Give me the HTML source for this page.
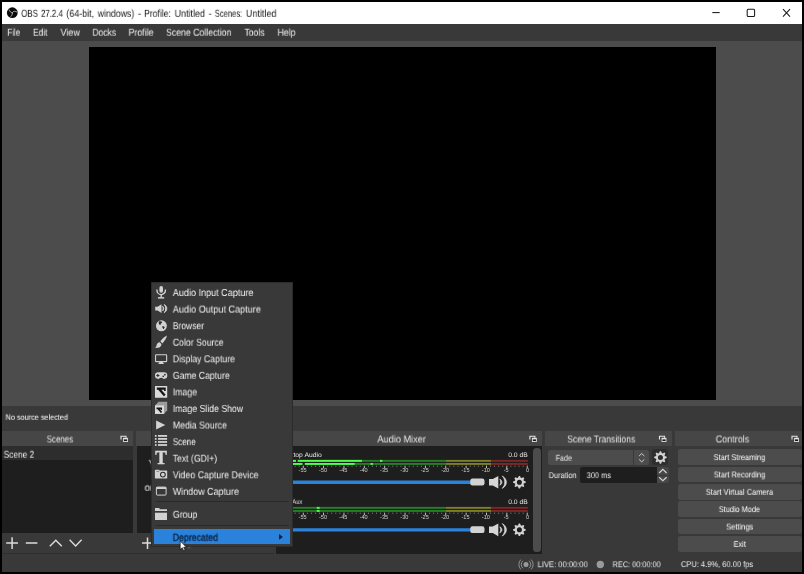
<!DOCTYPE html>
<html><head><meta charset="utf-8"><title>OBS</title>
<style>
html,body{margin:0;padding:0;}
body{width:804px;height:574px;background:#000;position:relative;overflow:hidden;font-family:'Liberation Sans',sans-serif;}
.a{position:absolute;}
.t{will-change:transform;text-rendering:geometricPrecision;left:0;top:0;position:absolute;white-space:pre;line-height:1;transform-origin:0 0;font-family:'Liberation Sans',sans-serif;}
svg{position:absolute;overflow:visible;}
.hdr{position:absolute;background:#474647;top:431px;height:15px;}
.btn{position:absolute;left:678px;width:124px;height:15.6px;background:#4c4c4c;border-radius:2.5px;}

</style></head>
<body>
<!-- window -->
<div class="a" style="left:2px;top:2px;width:800px;height:22px;background:#fff"></div>
<div class="a" style="left:2px;top:24px;width:800px;height:548px;background:#3a393a"></div>
<!-- preview surround + preview -->
<div class="a" style="left:2px;top:41px;width:800px;height:365px;background:#4c4c4c"></div>
<div class="a" style="left:89px;top:47px;width:627px;height:352.5px;background:#000"></div>
<!-- obs icon -->
<svg style="left:0;top:0" width="30" height="30"><circle cx="12.3" cy="12.7" r="5.4" fill="#0a0a0a"/>
<g fill="none" stroke="#d8d8d8" stroke-width="0.75" stroke-linecap="round"><path d="M12.3 12.9C11 12.4 9.6 11.4 9.2 10"/><path d="M12.3 12.9C12.6 11.8 13.6 11.2 14.6 11.3C15.4 11.4 16.2 11.6 16.7 11.9"/><path d="M12.3 12.9C12.6 14.2 12 15.6 10.9 16.5"/></g></svg>
<!-- window controls -->
<svg style="left:0;top:0" width="804" height="30"><g fill="none" stroke="#1a1a1a" stroke-width="1.05">
<path d="M712.3 12.6H719.7"/><rect x="747.2" y="9.2" width="7.4" height="7.2" rx="1"/><path d="M783 9.2L790 16.6M790 9.2L783 16.6"/></g></svg>

<!-- dock headers -->
<div class="hdr" style="left:2px;width:131px"></div>
<div class="hdr" style="left:136px;width:137px"></div>
<div class="hdr" style="left:276px;width:266px"></div>
<div class="hdr" style="left:545px;width:127px"></div>
<div class="hdr" style="left:675px;width:127px"></div>
<!-- scenes list -->
<div class="a" style="left:2px;top:446px;width:131px;height:87px;background:#1f1e1f"></div>
<div class="a" style="left:2px;top:446px;width:131px;height:14px;background:#2e2d2e"></div>
<!-- sources list -->
<div class="a" style="left:137px;top:446px;width:136px;height:87px;background:#1f1e1f"></div>
<!-- mixer -->
<div class="a" style="left:276px;top:446px;width:266px;height:107.5px;background:#1f1e1f"></div>
<div class="a" style="left:533px;top:447.5px;width:7.5px;height:104px;background:#4c4c4c;border-radius:3.5px"></div>
<!-- toolbar line -->
<div class="a" style="left:2px;top:553px;width:272px;height:1px;background:#2f2e2f"></div>
<!-- scenes toolbar icons -->
<svg style="left:0;top:0" width="300" height="574"><g fill="none" stroke="#dcdcdc" stroke-width="1.5">
<path d="M6.2 543H18M12.1 537.2V549"/><path d="M25.8 543H37.4"/>
<path d="M49.8 546.3L55.8 540.2L61.8 546.3" stroke-width="1.4"/><path d="M69.6 539.8L75.6 545.9L81.6 539.8" stroke-width="1.4"/>
<path d="M142 543H153M147.5 537.4V549"/>
</g></svg>
<!-- float icons -->
<svg style="left:0;top:0" width="804" height="574">
<g transform="translate(121 435.7)"><path d="M0 3.9V0.5H5V2" fill="none" stroke="#e6e6e6" stroke-width="1.1"/><rect x="2.1" y="2.1" width="4.8" height="4.2" fill="#e6e6e6"/><rect x="2.9" y="3.7" width="3.2" height="1.7" fill="#1a1a1a"/></g>
<g transform="translate(529.9 435.7)"><path d="M0 3.9V0.5H5V2" fill="none" stroke="#e6e6e6" stroke-width="1.1"/><rect x="2.1" y="2.1" width="4.8" height="4.2" fill="#e6e6e6"/><rect x="2.9" y="3.7" width="3.2" height="1.7" fill="#1a1a1a"/></g>
<g transform="translate(659.5 435.7)"><path d="M0 3.9V0.5H5V2" fill="none" stroke="#e6e6e6" stroke-width="1.1"/><rect x="2.1" y="2.1" width="4.8" height="4.2" fill="#e6e6e6"/><rect x="2.9" y="3.7" width="3.2" height="1.7" fill="#1a1a1a"/></g>
<g transform="translate(792 435.7)"><path d="M0 3.9V0.5H5V2" fill="none" stroke="#e6e6e6" stroke-width="1.1"/><rect x="2.1" y="2.1" width="4.8" height="4.2" fill="#e6e6e6"/><rect x="2.9" y="3.7" width="3.2" height="1.7" fill="#1a1a1a"/></g>
</svg>

<!-- transitions -->
<div class="a" style="left:548.4px;top:449.8px;width:100.4px;height:15px;background:#4c4c4c;border-radius:2.5px"></div>
<div class="a" style="left:632.9px;top:449.8px;width:1.2px;height:15px;background:#3a393a"></div>
<div class="a" style="left:651.9px;top:449.4px;width:16.6px;height:15.4px;background:#2f2e2f;border-radius:3px"></div>
<div class="a" style="left:580px;top:466.9px;width:77px;height:15.8px;background:#1f1e1f;border-radius:2.5px 0 0 2.5px"></div>
<div class="a" style="left:656.6px;top:467.2px;width:12.1px;height:7.5px;background:#484748;border-radius:0 2.5px 0 0"></div>
<div class="a" style="left:656.6px;top:475.6px;width:12.1px;height:7.1px;background:#484748;border-radius:0 0 2.5px 0"></div>
<svg style="left:0;top:0" width="804" height="574"><g fill="none" stroke="#d4d4d4" stroke-width="0.95">
<path d="M639.1 456L641.7 453.5L644.3 456M639.1 459.4L641.7 461.9L644.3 459.4"/>
<path d="M659.1 473L662.85 469.4L666.6 473M659.1 477.3L662.85 480.7L666.6 477.3" stroke-width="1.25"/></g></svg>

<!-- control buttons -->
<div class="btn" style="top:449.2px"></div><div class="btn" style="top:466.6px"></div><div class="btn" style="top:484.0px"></div>
<div class="btn" style="top:501.4px"></div><div class="btn" style="top:518.8px"></div><div class="btn" style="top:536.2px"></div>

<!-- status icons -->
<svg style="left:0;top:0" width="804" height="574"><circle cx="600.3" cy="564.5" r="3.7" fill="#9a9a9a"/>
<circle cx="526" cy="564.5" r="2.5" fill="#9a9a9a"/>
<g fill="none" stroke="#9a9a9a" stroke-width="0.9"><path d="M523 560.8A4.8 4.8 0 0 0 523 568.2M529 560.8A4.8 4.8 0 0 1 529 568.2"/><path d="M520.8 559.6A7.2 7.2 0 0 0 520.8 569.4M531.2 559.6A7.2 7.2 0 0 1 531.2 569.4"/></g></svg>
<svg style="left:0;top:0;will-change:transform" width="804" height="574">
<rect x="283.0" y="459.9" width="162.7" height="1.9" fill="#267f26"/>
<rect x="445.7" y="459.9" width="45.6" height="1.9" fill="#7f7f26"/>
<rect x="491.3" y="459.9" width="36.5" height="1.9" fill="#7f2626"/>
<rect x="283.0" y="463.0" width="162.7" height="1.9" fill="#267f26"/>
<rect x="445.7" y="463.0" width="45.6" height="1.9" fill="#7f7f26"/>
<rect x="491.3" y="463.0" width="36.5" height="1.9" fill="#7f2626"/>
<rect x="283.0" y="459.9" width="79.0" height="1.9" fill="#4cff4c"/>
<rect x="283.0" y="463" width="71.69999999999999" height="1.9" fill="#4cff4c"/>
<rect x="380" y="459.9" width="2.4" height="1.9" fill="#4cff4c"/>
<rect x="370.5" y="463" width="2.4" height="1.9" fill="#4cff4c"/>
<rect x="296" y="459.8" width="1.7" height="2.1" fill="#1f1e1f"/>
<rect x="302.5" y="462.9" width="2.3" height="2.1" fill="#1f1e1f"/>
<rect x="286.55" y="465.6" width="0.8" height="1.2" fill="#909090"/>
<rect x="290.62" y="465.6" width="0.8" height="1.2" fill="#909090"/>
<rect x="294.70" y="465.6" width="0.8" height="1.2" fill="#909090"/>
<rect x="298.77" y="465.6" width="0.8" height="1.2" fill="#909090"/>
<rect x="302.79" y="465.6" width="0.9" height="2.6" fill="#d0d0d0"/>
<rect x="306.91" y="465.6" width="0.8" height="1.2" fill="#909090"/>
<rect x="310.98" y="465.6" width="0.8" height="1.2" fill="#909090"/>
<rect x="315.06" y="465.6" width="0.8" height="1.2" fill="#909090"/>
<rect x="319.13" y="465.6" width="0.8" height="1.2" fill="#909090"/>
<rect x="323.15" y="465.6" width="0.9" height="2.6" fill="#d0d0d0"/>
<rect x="327.27" y="465.6" width="0.8" height="1.2" fill="#909090"/>
<rect x="331.34" y="465.6" width="0.8" height="1.2" fill="#909090"/>
<rect x="335.42" y="465.6" width="0.8" height="1.2" fill="#909090"/>
<rect x="339.49" y="465.6" width="0.8" height="1.2" fill="#909090"/>
<rect x="343.51" y="465.6" width="0.9" height="2.6" fill="#d0d0d0"/>
<rect x="347.63" y="465.6" width="0.8" height="1.2" fill="#909090"/>
<rect x="351.70" y="465.6" width="0.8" height="1.2" fill="#909090"/>
<rect x="355.78" y="465.6" width="0.8" height="1.2" fill="#909090"/>
<rect x="359.85" y="465.6" width="0.8" height="1.2" fill="#909090"/>
<rect x="363.87" y="465.6" width="0.9" height="2.6" fill="#d0d0d0"/>
<rect x="367.99" y="465.6" width="0.8" height="1.2" fill="#909090"/>
<rect x="372.06" y="465.6" width="0.8" height="1.2" fill="#909090"/>
<rect x="376.14" y="465.6" width="0.8" height="1.2" fill="#909090"/>
<rect x="380.21" y="465.6" width="0.8" height="1.2" fill="#909090"/>
<rect x="384.23" y="465.6" width="0.9" height="2.6" fill="#d0d0d0"/>
<rect x="388.35" y="465.6" width="0.8" height="1.2" fill="#909090"/>
<rect x="392.42" y="465.6" width="0.8" height="1.2" fill="#909090"/>
<rect x="396.50" y="465.6" width="0.8" height="1.2" fill="#909090"/>
<rect x="400.57" y="465.6" width="0.8" height="1.2" fill="#909090"/>
<rect x="404.59" y="465.6" width="0.9" height="2.6" fill="#d0d0d0"/>
<rect x="408.71" y="465.6" width="0.8" height="1.2" fill="#909090"/>
<rect x="412.78" y="465.6" width="0.8" height="1.2" fill="#909090"/>
<rect x="416.86" y="465.6" width="0.8" height="1.2" fill="#909090"/>
<rect x="420.93" y="465.6" width="0.8" height="1.2" fill="#909090"/>
<rect x="424.95" y="465.6" width="0.9" height="2.6" fill="#d0d0d0"/>
<rect x="429.07" y="465.6" width="0.8" height="1.2" fill="#909090"/>
<rect x="433.14" y="465.6" width="0.8" height="1.2" fill="#909090"/>
<rect x="437.22" y="465.6" width="0.8" height="1.2" fill="#909090"/>
<rect x="441.29" y="465.6" width="0.8" height="1.2" fill="#909090"/>
<rect x="445.31" y="465.6" width="0.9" height="2.6" fill="#d0d0d0"/>
<rect x="449.43" y="465.6" width="0.8" height="1.2" fill="#909090"/>
<rect x="453.50" y="465.6" width="0.8" height="1.2" fill="#909090"/>
<rect x="457.58" y="465.6" width="0.8" height="1.2" fill="#909090"/>
<rect x="461.65" y="465.6" width="0.8" height="1.2" fill="#909090"/>
<rect x="465.67" y="465.6" width="0.9" height="2.6" fill="#d0d0d0"/>
<rect x="469.79" y="465.6" width="0.8" height="1.2" fill="#909090"/>
<rect x="473.86" y="465.6" width="0.8" height="1.2" fill="#909090"/>
<rect x="477.94" y="465.6" width="0.8" height="1.2" fill="#909090"/>
<rect x="482.01" y="465.6" width="0.8" height="1.2" fill="#909090"/>
<rect x="486.03" y="465.6" width="0.9" height="2.6" fill="#d0d0d0"/>
<rect x="490.15" y="465.6" width="0.8" height="1.2" fill="#909090"/>
<rect x="494.22" y="465.6" width="0.8" height="1.2" fill="#909090"/>
<rect x="498.30" y="465.6" width="0.8" height="1.2" fill="#909090"/>
<rect x="502.37" y="465.6" width="0.8" height="1.2" fill="#909090"/>
<rect x="506.39" y="465.6" width="0.9" height="2.6" fill="#d0d0d0"/>
<rect x="510.51" y="465.6" width="0.8" height="1.2" fill="#909090"/>
<rect x="514.58" y="465.6" width="0.8" height="1.2" fill="#909090"/>
<rect x="518.66" y="465.6" width="0.8" height="1.2" fill="#909090"/>
<rect x="522.73" y="465.6" width="0.8" height="1.2" fill="#909090"/>
<rect x="526.75" y="465.6" width="0.9" height="2.6" fill="#d0d0d0"/>
<text x="302.6" y="472.3" font-family="'Liberation Sans',sans-serif" font-size="5.6" fill="#cfcfcf" text-anchor="middle">-55</text>
<text x="323.0" y="472.3" font-family="'Liberation Sans',sans-serif" font-size="5.6" fill="#cfcfcf" text-anchor="middle">-50</text>
<text x="343.4" y="472.3" font-family="'Liberation Sans',sans-serif" font-size="5.6" fill="#cfcfcf" text-anchor="middle">-45</text>
<text x="363.7" y="472.3" font-family="'Liberation Sans',sans-serif" font-size="5.6" fill="#cfcfcf" text-anchor="middle">-40</text>
<text x="384.1" y="472.3" font-family="'Liberation Sans',sans-serif" font-size="5.6" fill="#cfcfcf" text-anchor="middle">-35</text>
<text x="404.4" y="472.3" font-family="'Liberation Sans',sans-serif" font-size="5.6" fill="#cfcfcf" text-anchor="middle">-30</text>
<text x="424.8" y="472.3" font-family="'Liberation Sans',sans-serif" font-size="5.6" fill="#cfcfcf" text-anchor="middle">-25</text>
<text x="445.2" y="472.3" font-family="'Liberation Sans',sans-serif" font-size="5.6" fill="#cfcfcf" text-anchor="middle">-20</text>
<text x="465.5" y="472.3" font-family="'Liberation Sans',sans-serif" font-size="5.6" fill="#cfcfcf" text-anchor="middle">-15</text>
<text x="485.9" y="472.3" font-family="'Liberation Sans',sans-serif" font-size="5.6" fill="#cfcfcf" text-anchor="middle">-10</text>
<text x="506.2" y="472.3" font-family="'Liberation Sans',sans-serif" font-size="5.6" fill="#cfcfcf" text-anchor="middle">-5</text>
<text x="527.5" y="472.3" font-family="'Liberation Sans',sans-serif" font-size="5.6" fill="#cfcfcf" text-anchor="middle">0</text>
<rect x="283" y="480.6" width="190" height="3.3" rx="1.6" fill="#2a82da"/>
<rect x="470.3" y="478.6" width="14.2" height="6.9" rx="2.2" fill="#d2d2d2"/>
<g transform="translate(0,0)" fill="#d6d6d6"><path d="M489 479H492.8L498.3 475.9V488.6L492.8 485.5H489Z"/><path d="M499.8 479.2C502.6 480.6 502.6 483.8 499.8 485.2C501 483.4 501 481 499.8 479.2Z" stroke="#d6d6d6" stroke-width="0.7" stroke-linejoin="round"/><path d="M502.2 476C507.8 478.8 507.8 485.6 502.2 488.4C505.6 485 505.6 479.4 502.2 476Z" stroke="#d6d6d6" stroke-width="0.7" stroke-linejoin="round"/></g>
<path d="M523.83 480.83L525.72 481.57L525.72 482.83L523.83 483.57L523.50 484.36L524.32 486.22L523.42 487.12L521.56 486.30L520.77 486.63L520.03 488.52L518.77 488.52L518.03 486.63L517.24 486.30L515.38 487.12L514.48 486.22L515.30 484.36L514.97 483.57L513.08 482.83L513.08 481.57L514.97 480.83L515.30 480.04L514.48 478.18L515.38 477.28L517.24 478.10L518.03 477.77L518.77 475.88L520.03 475.88L520.77 477.77L521.56 478.10L523.42 477.28L524.32 478.18L523.50 480.04ZM521.94 482.20A2.54 2.54 0 1 0 516.86 482.20A2.54 2.54 0 1 0 521.94 482.20Z" fill="#d2d2d2" fill-rule="evenodd"/>
<rect x="283.0" y="506.9" width="162.7" height="1.9" fill="#267f26"/>
<rect x="445.7" y="506.9" width="45.6" height="1.9" fill="#7f7f26"/>
<rect x="491.3" y="506.9" width="36.5" height="1.9" fill="#7f2626"/>
<rect x="283.0" y="510.0" width="162.7" height="1.9" fill="#267f26"/>
<rect x="445.7" y="510.0" width="45.6" height="1.9" fill="#7f7f26"/>
<rect x="491.3" y="510.0" width="36.5" height="1.9" fill="#7f2626"/>
<rect x="316.8" y="506.9" width="2.8" height="1.9" fill="#4cff4c"/>
<rect x="316.8" y="510.0" width="2.8" height="1.9" fill="#4cff4c"/>
<rect x="286.55" y="512.6" width="0.8" height="1.2" fill="#909090"/>
<rect x="290.62" y="512.6" width="0.8" height="1.2" fill="#909090"/>
<rect x="294.70" y="512.6" width="0.8" height="1.2" fill="#909090"/>
<rect x="298.77" y="512.6" width="0.8" height="1.2" fill="#909090"/>
<rect x="302.79" y="512.6" width="0.9" height="2.6" fill="#d0d0d0"/>
<rect x="306.91" y="512.6" width="0.8" height="1.2" fill="#909090"/>
<rect x="310.98" y="512.6" width="0.8" height="1.2" fill="#909090"/>
<rect x="315.06" y="512.6" width="0.8" height="1.2" fill="#909090"/>
<rect x="319.13" y="512.6" width="0.8" height="1.2" fill="#909090"/>
<rect x="323.15" y="512.6" width="0.9" height="2.6" fill="#d0d0d0"/>
<rect x="327.27" y="512.6" width="0.8" height="1.2" fill="#909090"/>
<rect x="331.34" y="512.6" width="0.8" height="1.2" fill="#909090"/>
<rect x="335.42" y="512.6" width="0.8" height="1.2" fill="#909090"/>
<rect x="339.49" y="512.6" width="0.8" height="1.2" fill="#909090"/>
<rect x="343.51" y="512.6" width="0.9" height="2.6" fill="#d0d0d0"/>
<rect x="347.63" y="512.6" width="0.8" height="1.2" fill="#909090"/>
<rect x="351.70" y="512.6" width="0.8" height="1.2" fill="#909090"/>
<rect x="355.78" y="512.6" width="0.8" height="1.2" fill="#909090"/>
<rect x="359.85" y="512.6" width="0.8" height="1.2" fill="#909090"/>
<rect x="363.87" y="512.6" width="0.9" height="2.6" fill="#d0d0d0"/>
<rect x="367.99" y="512.6" width="0.8" height="1.2" fill="#909090"/>
<rect x="372.06" y="512.6" width="0.8" height="1.2" fill="#909090"/>
<rect x="376.14" y="512.6" width="0.8" height="1.2" fill="#909090"/>
<rect x="380.21" y="512.6" width="0.8" height="1.2" fill="#909090"/>
<rect x="384.23" y="512.6" width="0.9" height="2.6" fill="#d0d0d0"/>
<rect x="388.35" y="512.6" width="0.8" height="1.2" fill="#909090"/>
<rect x="392.42" y="512.6" width="0.8" height="1.2" fill="#909090"/>
<rect x="396.50" y="512.6" width="0.8" height="1.2" fill="#909090"/>
<rect x="400.57" y="512.6" width="0.8" height="1.2" fill="#909090"/>
<rect x="404.59" y="512.6" width="0.9" height="2.6" fill="#d0d0d0"/>
<rect x="408.71" y="512.6" width="0.8" height="1.2" fill="#909090"/>
<rect x="412.78" y="512.6" width="0.8" height="1.2" fill="#909090"/>
<rect x="416.86" y="512.6" width="0.8" height="1.2" fill="#909090"/>
<rect x="420.93" y="512.6" width="0.8" height="1.2" fill="#909090"/>
<rect x="424.95" y="512.6" width="0.9" height="2.6" fill="#d0d0d0"/>
<rect x="429.07" y="512.6" width="0.8" height="1.2" fill="#909090"/>
<rect x="433.14" y="512.6" width="0.8" height="1.2" fill="#909090"/>
<rect x="437.22" y="512.6" width="0.8" height="1.2" fill="#909090"/>
<rect x="441.29" y="512.6" width="0.8" height="1.2" fill="#909090"/>
<rect x="445.31" y="512.6" width="0.9" height="2.6" fill="#d0d0d0"/>
<rect x="449.43" y="512.6" width="0.8" height="1.2" fill="#909090"/>
<rect x="453.50" y="512.6" width="0.8" height="1.2" fill="#909090"/>
<rect x="457.58" y="512.6" width="0.8" height="1.2" fill="#909090"/>
<rect x="461.65" y="512.6" width="0.8" height="1.2" fill="#909090"/>
<rect x="465.67" y="512.6" width="0.9" height="2.6" fill="#d0d0d0"/>
<rect x="469.79" y="512.6" width="0.8" height="1.2" fill="#909090"/>
<rect x="473.86" y="512.6" width="0.8" height="1.2" fill="#909090"/>
<rect x="477.94" y="512.6" width="0.8" height="1.2" fill="#909090"/>
<rect x="482.01" y="512.6" width="0.8" height="1.2" fill="#909090"/>
<rect x="486.03" y="512.6" width="0.9" height="2.6" fill="#d0d0d0"/>
<rect x="490.15" y="512.6" width="0.8" height="1.2" fill="#909090"/>
<rect x="494.22" y="512.6" width="0.8" height="1.2" fill="#909090"/>
<rect x="498.30" y="512.6" width="0.8" height="1.2" fill="#909090"/>
<rect x="502.37" y="512.6" width="0.8" height="1.2" fill="#909090"/>
<rect x="506.39" y="512.6" width="0.9" height="2.6" fill="#d0d0d0"/>
<rect x="510.51" y="512.6" width="0.8" height="1.2" fill="#909090"/>
<rect x="514.58" y="512.6" width="0.8" height="1.2" fill="#909090"/>
<rect x="518.66" y="512.6" width="0.8" height="1.2" fill="#909090"/>
<rect x="522.73" y="512.6" width="0.8" height="1.2" fill="#909090"/>
<rect x="526.75" y="512.6" width="0.9" height="2.6" fill="#d0d0d0"/>
<text x="302.6" y="519.3" font-family="'Liberation Sans',sans-serif" font-size="5.6" fill="#cfcfcf" text-anchor="middle">-55</text>
<text x="323.0" y="519.3" font-family="'Liberation Sans',sans-serif" font-size="5.6" fill="#cfcfcf" text-anchor="middle">-50</text>
<text x="343.4" y="519.3" font-family="'Liberation Sans',sans-serif" font-size="5.6" fill="#cfcfcf" text-anchor="middle">-45</text>
<text x="363.7" y="519.3" font-family="'Liberation Sans',sans-serif" font-size="5.6" fill="#cfcfcf" text-anchor="middle">-40</text>
<text x="384.1" y="519.3" font-family="'Liberation Sans',sans-serif" font-size="5.6" fill="#cfcfcf" text-anchor="middle">-35</text>
<text x="404.4" y="519.3" font-family="'Liberation Sans',sans-serif" font-size="5.6" fill="#cfcfcf" text-anchor="middle">-30</text>
<text x="424.8" y="519.3" font-family="'Liberation Sans',sans-serif" font-size="5.6" fill="#cfcfcf" text-anchor="middle">-25</text>
<text x="445.2" y="519.3" font-family="'Liberation Sans',sans-serif" font-size="5.6" fill="#cfcfcf" text-anchor="middle">-20</text>
<text x="465.5" y="519.3" font-family="'Liberation Sans',sans-serif" font-size="5.6" fill="#cfcfcf" text-anchor="middle">-15</text>
<text x="485.9" y="519.3" font-family="'Liberation Sans',sans-serif" font-size="5.6" fill="#cfcfcf" text-anchor="middle">-10</text>
<text x="506.2" y="519.3" font-family="'Liberation Sans',sans-serif" font-size="5.6" fill="#cfcfcf" text-anchor="middle">-5</text>
<text x="527.5" y="519.3" font-family="'Liberation Sans',sans-serif" font-size="5.6" fill="#cfcfcf" text-anchor="middle">0</text>
<rect x="283" y="528.2" width="190" height="3.3" rx="1.6" fill="#2a82da"/>
<rect x="470.3" y="526.2" width="14.2" height="6.9" rx="2.2" fill="#d2d2d2"/>
<g transform="translate(0,47.6)" fill="#d6d6d6"><path d="M489 479H492.8L498.3 475.9V488.6L492.8 485.5H489Z"/><path d="M499.8 479.2C502.6 480.6 502.6 483.8 499.8 485.2C501 483.4 501 481 499.8 479.2Z" stroke="#d6d6d6" stroke-width="0.7" stroke-linejoin="round"/><path d="M502.2 476C507.8 478.8 507.8 485.6 502.2 488.4C505.6 485 505.6 479.4 502.2 476Z" stroke="#d6d6d6" stroke-width="0.7" stroke-linejoin="round"/></g>
<path d="M523.83 528.43L525.72 529.17L525.72 530.43L523.83 531.17L523.50 531.96L524.32 533.82L523.42 534.72L521.56 533.90L520.77 534.23L520.03 536.12L518.77 536.12L518.03 534.23L517.24 533.90L515.38 534.72L514.48 533.82L515.30 531.96L514.97 531.17L513.08 530.43L513.08 529.17L514.97 528.43L515.30 527.64L514.48 525.78L515.38 524.88L517.24 525.70L518.03 525.37L518.77 523.48L520.03 523.48L520.77 525.37L521.56 525.70L523.42 524.88L524.32 525.78L523.50 527.64ZM521.94 529.80A2.54 2.54 0 1 0 516.86 529.80A2.54 2.54 0 1 0 521.94 529.80Z" fill="#d2d2d2" fill-rule="evenodd"/>
<path d="M664.84 456.09L666.72 456.82L666.72 458.08L664.84 458.81L664.52 459.60L665.33 461.44L664.44 462.33L662.60 461.52L661.81 461.84L661.08 463.72L659.82 463.72L659.09 461.84L658.30 461.52L656.46 462.33L655.57 461.44L656.38 459.60L656.06 458.81L654.18 458.08L654.18 456.82L656.06 456.09L656.38 455.30L655.57 453.46L656.46 452.57L658.30 453.38L659.09 453.06L659.82 451.18L661.08 451.18L661.81 453.06L662.60 453.38L664.44 452.57L665.33 453.46L664.52 455.30ZM662.97 457.45A2.52 2.52 0 1 0 657.93 457.45A2.52 2.52 0 1 0 662.97 457.45Z" fill="#d2d2d2" fill-rule="evenodd"/>
</svg><!-- popup menu -->
<div class="a" style="left:151px;top:282px;width:142.4px;height:265px;background:#3a393a;box-shadow:inset 0 0 0 0.8px #2a292a;z-index:10"></div>
<div class="a" style="left:155.5px;top:501px;width:133px;height:1px;background:#2b2a2b;z-index:11"></div>
<div class="a" style="left:155.5px;top:524.6px;width:133px;height:1px;background:#2b2a2b;z-index:11"></div>
<div class="a" style="left:153.6px;top:529.2px;width:136.6px;height:14.8px;background:#2a82da;z-index:11"></div>
<svg style="left:0;top:0;z-index:12;will-change:transform" width="804" height="574">
<g fill="#d2d2d2" stroke="none">
<!-- mic -->
<rect x="159.4" y="286.1" width="3.6" height="6.6" rx="1.8"/>
<path d="M157 289.6V290.4A4.2 4.2 0 0 0 165.4 290.4V289.6" fill="none" stroke="#d2d2d2" stroke-width="1.4"/>
<rect x="160.5" y="294.6" width="1.4" height="2.8"/><rect x="158" y="297.1" width="6.2" height="1.5"/>
<!-- speaker -->
<path d="M155.2 306.7H157.6L161.5 304.3V312.9L157.6 310.4H155.2Z"/>
<path d="M162.6 306.3C164.1 307.4 164.1 309.8 162.6 310.9C163.3 309.6 163.3 307.6 162.6 306.3Z" stroke="#d2d2d2" stroke-width="0.9" stroke-linejoin="round"/>
<path d="M164.3 304.6C167.6 306.6 167.6 310.6 164.3 312.6C166.2 310.4 166.2 306.8 164.3 304.6Z" stroke="#d2d2d2" stroke-width="1" stroke-linejoin="round"/>
<!-- globe -->
<circle cx="161.4" cy="325.8" r="5.45"/>
<path d="M158.9 321.4C160 320.9 161.6 321.2 162.2 322.2C161.8 323.2 161 323.3 160.6 324C161 324.8 160.2 325.4 159.6 324.8C159.2 324 158.4 323.4 158.9 321.4Z" fill="#2e2d2e"/>
<path d="M162.2 326.4C163 326 164.2 326.2 164.8 327C164.6 328 164 328.2 163.8 329C163.2 329.4 162.8 328.6 162.8 327.8C162.2 327.4 161.8 326.8 162.2 326.4Z" fill="#2e2d2e"/>
<!-- brush -->
<path d="M166.9 335.6C166.6 338 164.6 341.4 162.4 343.4L160.3 341.3C162 339.2 164.9 336.4 166.9 335.6Z"/>
<path d="M159.6 342.2L161.4 344C161.6 346 160 347.6 158 347.8C156.8 348 155.8 348 155 347.8C156 347.2 156.4 346.4 156.6 345.2C156.8 343.6 158 342.4 159.6 342.2Z"/>
<!-- display -->
<rect x="155.55" y="354.75" width="11.1" height="6.9" rx="0.7" fill="none" stroke="#d2d2d2" stroke-width="1.1"/>
<path d="M159.6 362H162.6L164 364H158.2Z"/>
<!-- gamepad -->
<path d="M158.3 372.3H164A3.3 3.3 0 0 1 164 378.9C163 378.9 162.6 377.8 161.15 377.8C159.7 377.8 159.3 378.9 158.3 378.9A3.3 3.3 0 0 1 158.3 372.3Z"/>
<path d="M156.3 375.1H157.3V374.1H158.4V375.1H159.4V376.1H158.4V377.1H157.3V376.1H156.3Z" fill="#2e2d2e"/>
<circle cx="163.2" cy="376.3" r="0.85" fill="#2e2d2e"/><circle cx="164.9" cy="374.7" r="0.85" fill="#2e2d2e"/>
<!-- image -->
<rect x="155" y="385.9" width="12.2" height="11.9" rx="0.4" fill="#dadada"/>
<path d="M156.8 387.4H165.7V391H164.1V389.7H161.3L165.6 394.7L163.9 396.3L158.2 389.7H156.8Z" fill="#161516"/>
<!-- slideshow -->
<path d="M158.5 401.8H167.2V410.2L164 413.9H155V405.4Z" fill="#9c9c9c"/>
<rect x="155" y="405.4" width="9" height="8.5" fill="#dadada"/>
<path d="M156.5 407.4H162V410H160.8V409.3H159.8L162.2 412L160.9 413.1L157.6 409.3H156.5Z" fill="#161516"/>
<!-- play -->
<path d="M156.1 420.4L165.3 424.9L156.1 429.5Z"/>
<!-- scene list -->
<g><rect x="154.9" y="435" width="1.7" height="1.8"/><rect x="158" y="435" width="9.1" height="1.8"/>
<rect x="154.9" y="438" width="1.7" height="1.8"/><rect x="158" y="438" width="9.1" height="1.8"/>
<rect x="154.9" y="441.05" width="1.7" height="1.8"/><rect x="158" y="441.05" width="9.1" height="1.8"/>
<rect x="154.9" y="444.1" width="1.7" height="1.8"/><rect x="158" y="444.1" width="9.1" height="1.8"/></g>
<!-- T -->
<text x="161.1" y="464.1" font-family="'Liberation Serif',serif" font-weight="700" font-size="18.4" text-anchor="middle" fill="#d6d6d6" stroke="#d6d6d6" stroke-width="0.5" transform="translate(161.1 0) scale(0.95 1) translate(-161.1 0)">T</text>
<!-- camera -->
<path d="M155.7 469.8H159.3V470.6H166.6Q167.2 470.6 167.2 471.2V477.9Q167.2 478.5 166.6 478.5H155.5Q154.9 478.5 154.9 477.9V470.6Q154.9 469.8 155.7 469.8Z"/>
<circle cx="162.9" cy="474.6" r="2.4" fill="none" stroke="#2e2d2e" stroke-width="1.1"/>
<rect x="156.6" y="471.2" width="2.4" height="0.6" fill="#5a5a5a"/>
<!-- window -->
<rect x="156.4" y="487.1" width="9.7" height="8" rx="0.9" fill="none" stroke="#d2d2d2" stroke-width="1"/>
<rect x="156.4" y="487.1" width="9.7" height="1.9"/>
<!-- folder -->
<path d="M155 508.1H159.5V509.2H167V511H155Z"/>
<rect x="155" y="512.7" width="12" height="7.3" fill="#d2d2d2"/>
</g>
<!-- submenu arrow -->
<path d="M279.1 534L282.8 536.9L279.1 539.8Z" fill="#111a24"/>
</svg>
<!-- cursor -->
<svg style="left:0;top:0;z-index:30" width="804" height="574">
<path d="M180.2 541V549.6L182.3 547.7L183.6 550.8L185.1 550.1L183.7 547.2H186.5Z" fill="#fff" stroke="#111" stroke-width="0.7" stroke-linejoin="round"/>
<path d="M187.6 547.2L190.6 546.4L190.2 548.4L187.8 548.8Z" fill="#6a6a6a" opacity="0.6"/>
</svg>

<span class="t" style="font-size:10.3px;color:#161616;font-weight:400;transform:translate(21.10px,9.82px) scaleX(0.7724);">OBS</span>
<span class="t" style="font-size:10.3px;color:#161616;font-weight:400;transform:translate(41.00px,9.82px) scaleX(0.7612);">27.2.4</span>
<span class="t" style="font-size:10.3px;color:#161616;font-weight:400;transform:translate(66.30px,9.82px) scaleX(0.8671);">(64-bit,</span>
<span class="t" style="font-size:10.3px;color:#161616;font-weight:400;transform:translate(97.70px,9.82px) scaleX(0.8504);">windows)</span>
<span class="t" style="font-size:10.3px;color:#161616;font-weight:400;transform:translate(137.90px,9.82px) scaleX(0.9600);">-</span>
<span class="t" style="font-size:10.3px;color:#161616;font-weight:400;transform:translate(144.10px,9.82px) scaleX(0.8327);">Profile:</span>
<span class="t" style="font-size:10.3px;color:#161616;font-weight:400;transform:translate(174.60px,9.82px) scaleX(0.8677);">Untitled</span>
<span class="t" style="font-size:10.3px;color:#161616;font-weight:400;transform:translate(208.60px,9.82px) scaleX(0.9018);">-</span>
<span class="t" style="font-size:10.3px;color:#161616;font-weight:400;transform:translate(214.80px,9.82px) scaleX(0.7362);">Scenes:</span>
<span class="t" style="font-size:10.3px;color:#161616;font-weight:400;transform:translate(245.90px,9.82px) scaleX(0.8734);">Untitled</span>
<span class="t" style="font-size:10.2px;color:#f2f2f2;font-weight:400;transform:translate(7.40px,28.70px) scaleX(0.7734);">File</span>
<span class="t" style="font-size:10.2px;color:#f2f2f2;font-weight:400;transform:translate(33.00px,28.70px) scaleX(0.8256);">Edit</span>
<span class="t" style="font-size:10.2px;color:#f2f2f2;font-weight:400;transform:translate(60.50px,28.70px) scaleX(0.8902);">View</span>
<span class="t" style="font-size:10.2px;color:#f2f2f2;font-weight:400;transform:translate(92.50px,28.70px) scaleX(0.8300);">Docks</span>
<span class="t" style="font-size:10.2px;color:#f2f2f2;font-weight:400;transform:translate(128.50px,28.70px) scaleX(0.8653);">Profile</span>
<span class="t" style="font-size:10.2px;color:#f2f2f2;font-weight:400;transform:translate(166.00px,28.70px) scaleX(0.8567);">Scene Collection</span>
<span class="t" style="font-size:10.2px;color:#f2f2f2;font-weight:400;transform:translate(244.50px,28.70px) scaleX(0.8410);">Tools</span>
<span class="t" style="font-size:10.2px;color:#f2f2f2;font-weight:400;transform:translate(277.50px,28.70px) scaleX(0.8591);">Help</span>
<span class="t" style="font-size:7.9px;color:#ffffff;font-weight:400;transform:translate(5.60px,413.81px) scaleX(0.9223);">No source selected</span>
<span class="t" style="font-size:10.2px;color:#e8e8e8;font-weight:400;transform:translate(46.70px,435.50px) scaleX(0.7768);">Scenes</span>
<span class="t" style="font-size:10.2px;color:#e8e8e8;font-weight:400;transform:translate(377.40px,435.50px) scaleX(0.8997);">Audio Mixer</span>
<span class="t" style="font-size:10.2px;color:#e8e8e8;font-weight:400;transform:translate(567.30px,435.50px) scaleX(0.8384);">Scene Transitions</span>
<span class="t" style="font-size:10.2px;color:#e8e8e8;font-weight:400;transform:translate(715.70px,435.50px) scaleX(0.8857);">Controls</span>
<span class="t" style="font-size:9.9px;color:#f2f2f2;font-weight:400;transform:translate(3.70px,450.70px) scaleX(0.8414);">Scene 2</span>
<span class="t" style="font-size:10.2px;color:#f2f2f2;font-weight:400;transform:translate(172.80px,289.00px) scaleX(0.8894);z-index:20">Audio Input Capture</span>
<span class="t" style="font-size:10.2px;color:#f2f2f2;font-weight:400;transform:translate(172.80px,305.57px) scaleX(0.8930);z-index:20">Audio Output Capture</span>
<span class="t" style="font-size:10.2px;color:#f2f2f2;font-weight:400;transform:translate(172.80px,322.14px) scaleX(0.8348);z-index:20">Browser</span>
<span class="t" style="font-size:10.2px;color:#f2f2f2;font-weight:400;transform:translate(172.80px,338.71px) scaleX(0.8542);z-index:20">Color Source</span>
<span class="t" style="font-size:10.2px;color:#f2f2f2;font-weight:400;transform:translate(172.80px,355.28px) scaleX(0.8581);z-index:20">Display Capture</span>
<span class="t" style="font-size:10.2px;color:#f2f2f2;font-weight:400;transform:translate(172.80px,371.85px) scaleX(0.8514);z-index:20">Game Capture</span>
<span class="t" style="font-size:10.2px;color:#f2f2f2;font-weight:400;transform:translate(172.80px,388.42px) scaleX(0.8543);z-index:20">Image</span>
<span class="t" style="font-size:10.2px;color:#f2f2f2;font-weight:400;transform:translate(172.80px,404.99px) scaleX(0.8560);z-index:20">Image Slide Show</span>
<span class="t" style="font-size:10.2px;color:#f2f2f2;font-weight:400;transform:translate(172.80px,421.56px) scaleX(0.8607);z-index:20">Media Source</span>
<span class="t" style="font-size:10.2px;color:#f2f2f2;font-weight:400;transform:translate(172.80px,438.13px) scaleX(0.7926);z-index:20">Scene</span>
<span class="t" style="font-size:10.2px;color:#f2f2f2;font-weight:400;transform:translate(172.80px,454.70px) scaleX(0.8461);z-index:20">Text (GDI+)</span>
<span class="t" style="font-size:10.2px;color:#f2f2f2;font-weight:400;transform:translate(172.80px,471.27px) scaleX(0.8663);z-index:20">Video Capture Device</span>
<span class="t" style="font-size:10.2px;color:#f2f2f2;font-weight:400;transform:translate(172.80px,487.84px) scaleX(0.8777);z-index:20">Window Capture</span>
<span class="t" style="font-size:10.2px;color:#f2f2f2;font-weight:400;transform:translate(172.80px,510.80px) scaleX(0.8649);z-index:20">Group</span>
<span class="t" style="font-size:10.2px;color:#0b2547;font-weight:400;transform:translate(172.80px,533.80px) scaleX(0.8581);z-index:20;-webkit-text-stroke:0.35px #0b2547">Deprecated</span>
<span class="t" style="font-size:6.6px;color:#e4e4e4;font-weight:400;transform:translate(277.88px,452.72px) scaleX(1.0327);">Desktop Audio</span>
<span class="t" style="font-size:6.6px;color:#e4e4e4;font-weight:400;transform:translate(282.01px,499.82px) scaleX(0.8610);">Mic/Aux</span>
<span class="t" style="font-size:6.6px;color:#e4e4e4;font-weight:400;transform:translate(508.20px,452.82px) scaleX(1.0274);">0.0 dB</span>
<span class="t" style="font-size:6.6px;color:#e4e4e4;font-weight:400;transform:translate(508.20px,499.92px) scaleX(1.0274);">0.0 dB</span>
<span class="t" style="font-size:8.4px;color:#f2f2f2;font-weight:400;transform:translate(555.70px,453.71px) scaleX(0.8484);">Fade</span>
<span class="t" style="font-size:8.4px;color:#f2f2f2;font-weight:400;transform:translate(548.70px,471.11px) scaleX(0.8813);">Duration</span>
<span class="t" style="font-size:8.4px;color:#f2f2f2;font-weight:400;transform:translate(586.70px,471.11px) scaleX(0.8846);">300 ms</span>
<span class="t" style="font-size:8.4px;color:#ffffff;font-weight:400;transform:translate(713.60px,453.11px) scaleX(0.8885);">Start Streaming</span>
<span class="t" style="font-size:8.4px;color:#ffffff;font-weight:400;transform:translate(713.80px,470.41px) scaleX(0.8851);">Start Recording</span>
<span class="t" style="font-size:8.4px;color:#ffffff;font-weight:400;transform:translate(705.80px,487.81px) scaleX(0.8901);">Start Virtual Camera</span>
<span class="t" style="font-size:8.4px;color:#ffffff;font-weight:400;transform:translate(718.80px,505.11px) scaleX(0.8781);">Studio Mode</span>
<span class="t" style="font-size:8.4px;color:#ffffff;font-weight:400;transform:translate(726.20px,522.51px) scaleX(0.8921);">Settings</span>
<span class="t" style="font-size:8.4px;color:#ffffff;font-weight:400;transform:translate(733.60px,539.91px) scaleX(0.8734);">Exit</span>
<span class="t" style="font-size:8.4px;color:#f2f2f2;font-weight:400;transform:translate(537.60px,560.21px) scaleX(0.9058);">LIVE: 00:00:00</span>
<span class="t" style="font-size:8.4px;color:#f2f2f2;font-weight:400;transform:translate(612.60px,560.21px) scaleX(0.8755);">REC: 00:00:00</span>
<span class="t" style="font-size:8.4px;color:#f2f2f2;font-weight:400;transform:translate(680.90px,560.01px) scaleX(0.8976);">CPU: 4.9%, 60.00 fps</span>
<span class="t" style="font-size:10.2px;color:#f2f2f2;font-weight:400;transform:translate(148.60px,459.80px) scaleX(0.8828);">Y</span>
<span class="t" style="font-size:10.2px;color:#f2f2f2;font-weight:400;transform:translate(144.60px,483.80px) scaleX(0.9490);">or</span>
</body></html>
